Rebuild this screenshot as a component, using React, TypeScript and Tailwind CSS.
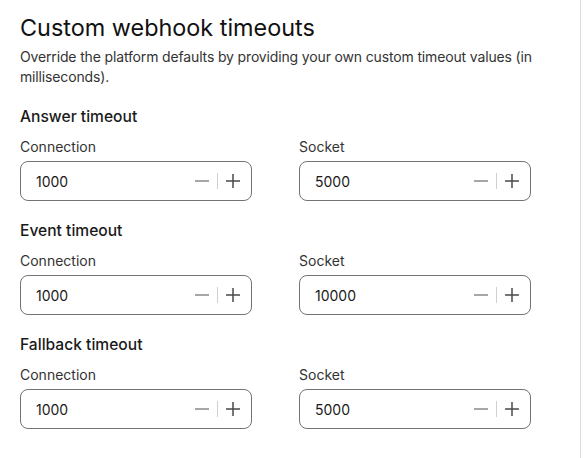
import React from 'react';

interface Group {
  title: string;
  connection: string;
  socket: string;
}

const groups: Group[] = [
  { title: 'Answer timeout', connection: '1000', socket: '5000' },
  { title: 'Event timeout', connection: '1000', socket: '10000' },
  { title: 'Fallback timeout', connection: '1000', socket: '5000' },
];

const Minus = () => (
  <svg width="16" height="16" viewBox="0 0 16 16" fill="none">
    <path d="M1 8h14" stroke="#8a8a8a" strokeWidth="1.5" />
  </svg>
);

const Plus = () => (
  <svg width="16" height="16" viewBox="0 0 16 16" fill="none">
    <path d="M1 8h14M8 1v14" stroke="#4a4a4a" strokeWidth="1.5" />
  </svg>
);

const NumberField: React.FC<{ label: string; value: string }> = ({ label, value }) => (
  <div className="flex flex-col">
    <label className="text-[14px] leading-5 text-[#333]">{label}</label>
    <div className="mt-1 flex h-10 items-center rounded-lg border border-[#737373] bg-white pl-[15px] pr-[10px]">
      <span className="flex-1 text-[14px] text-[#1a1a1a]">{value}</span>
      <button className="flex items-center">
        <Minus />
      </button>
      <span className="mx-[7px] h-[16px] w-px bg-[#d0d0d0]" />
      <button className="flex items-center">
        <Plus />
      </button>
    </div>
  </div>
);

export default function App() {
  return (
    <div
      className="h-[458px] w-[581px] border-r border-[#dcdcdc] bg-white pl-5 pt-[14px]"
      style={{ fontFamily: 'Inter, "Noto Sans", sans-serif' }}
    >
      <h1 className="text-[23.4px] leading-7 text-[#111]">Custom webhook timeouts</h1>
      <p className="mt-[5px] w-[525px] text-[14px] leading-5 tracking-[-0.15px] text-[#333]">
        Override the platform defaults by providing your own custom timeout values (in milliseconds).
      </p>
      <div className="mt-[19px] flex flex-col gap-[19px]">
        {groups.map(g => (
          <section key={g.title}>
            <h2 className="text-[15.6px] font-medium leading-[22px] text-[#1a1a1a]">{g.title}</h2>
            <div className="mt-[9px] grid grid-cols-[232px_232px] gap-x-[47px]">
              <NumberField label="Connection" value={g.connection} />
              <NumberField label="Socket" value={g.socket} />
            </div>
          </section>
        ))}
      </div>
    </div>
  );
}
